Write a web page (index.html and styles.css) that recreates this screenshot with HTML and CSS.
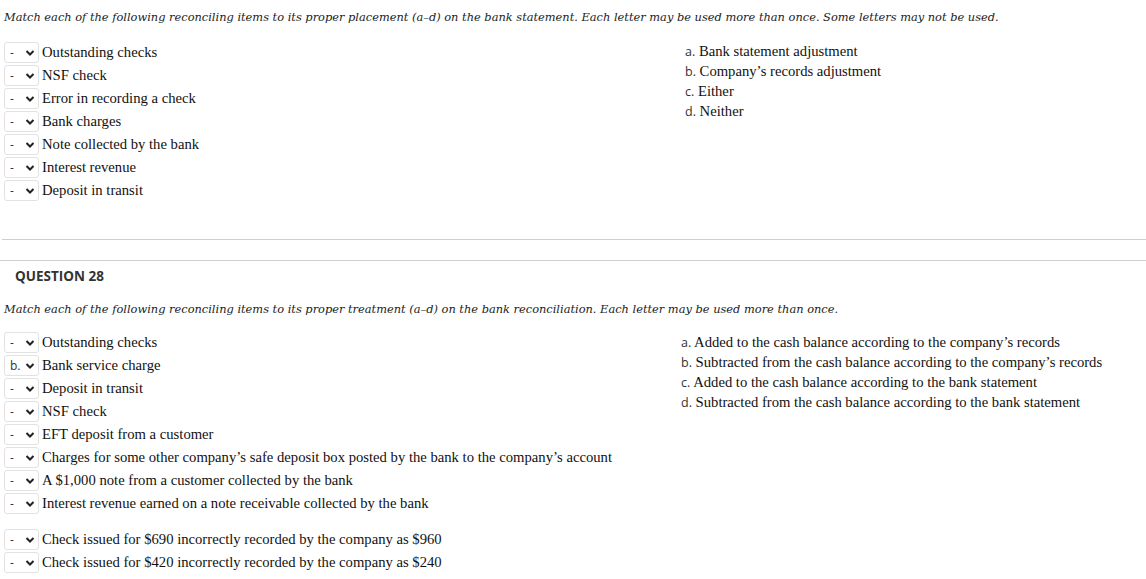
FILE: index.html
```html
<!DOCTYPE html>
<html>
<head>
<meta charset="utf-8">
<link rel="stylesheet" href="styles.css">
</head>
<body>
<div class="q q1">
  <p class="intro">Match each of the following reconciling items to its proper placement (a–d) on the bank statement. Each letter may be used more than once. Some letters may not be used.</p>
  <div class="match">
    <ul class="items">
      <li><span class="sel"><span class="val">-</span><svg class="chev" viewBox="0 0 10 8" width="10" height="8"><path d="M1.5 2 L5 5.5 L8.5 2" fill="none" stroke="#222" stroke-width="2"/></svg></span>Outstanding checks</li>
      <li><span class="sel"><span class="val">-</span><svg class="chev" viewBox="0 0 10 8" width="10" height="8"><path d="M1.5 2 L5 5.5 L8.5 2" fill="none" stroke="#222" stroke-width="2"/></svg></span>NSF check</li>
      <li><span class="sel"><span class="val">-</span><svg class="chev" viewBox="0 0 10 8" width="10" height="8"><path d="M1.5 2 L5 5.5 L8.5 2" fill="none" stroke="#222" stroke-width="2"/></svg></span>Error in recording a check</li>
      <li><span class="sel"><span class="val">-</span><svg class="chev" viewBox="0 0 10 8" width="10" height="8"><path d="M1.5 2 L5 5.5 L8.5 2" fill="none" stroke="#222" stroke-width="2"/></svg></span>Bank charges</li>
      <li><span class="sel"><span class="val">-</span><svg class="chev" viewBox="0 0 10 8" width="10" height="8"><path d="M1.5 2 L5 5.5 L8.5 2" fill="none" stroke="#222" stroke-width="2"/></svg></span>Note collected by the bank</li>
      <li><span class="sel"><span class="val">-</span><svg class="chev" viewBox="0 0 10 8" width="10" height="8"><path d="M1.5 2 L5 5.5 L8.5 2" fill="none" stroke="#222" stroke-width="2"/></svg></span>Interest revenue</li>
      <li><span class="sel"><span class="val">-</span><svg class="chev" viewBox="0 0 10 8" width="10" height="8"><path d="M1.5 2 L5 5.5 L8.5 2" fill="none" stroke="#222" stroke-width="2"/></svg></span>Deposit in transit</li>
    </ul>
    <ol class="choices">
      <li><span class="let">a.</span> Bank statement adjustment</li>
      <li><span class="let">b.</span> Company’s records adjustment</li>
      <li><span class="let">c.</span> Either</li>
      <li><span class="let">d.</span> Neither</li>
    </ol>
  </div>
</div>
<hr class="rule rule-a">
<hr class="rule rule-b">
<div class="q q2">
  <h2 class="qtitle">QUESTION 28</h2>
  <p class="intro">Match each of the following reconciling items to its proper treatment (a–d) on the bank reconciliation. Each letter may be used more than once.</p>
  <div class="match">
    <div class="items-wrap">
      <ul class="items">
        <li><span class="sel"><span class="val">-</span><svg class="chev" viewBox="0 0 10 8" width="10" height="8"><path d="M1.5 2 L5 5.5 L8.5 2" fill="none" stroke="#222" stroke-width="2"/></svg></span>Outstanding checks</li>
        <li><span class="sel"><span class="val">b.</span><svg class="chev" viewBox="0 0 10 8" width="10" height="8"><path d="M1.5 2 L5 5.5 L8.5 2" fill="none" stroke="#222" stroke-width="2"/></svg></span>Bank service charge</li>
        <li><span class="sel"><span class="val">-</span><svg class="chev" viewBox="0 0 10 8" width="10" height="8"><path d="M1.5 2 L5 5.5 L8.5 2" fill="none" stroke="#222" stroke-width="2"/></svg></span>Deposit in transit</li>
        <li><span class="sel"><span class="val">-</span><svg class="chev" viewBox="0 0 10 8" width="10" height="8"><path d="M1.5 2 L5 5.5 L8.5 2" fill="none" stroke="#222" stroke-width="2"/></svg></span>NSF check</li>
        <li><span class="sel"><span class="val">-</span><svg class="chev" viewBox="0 0 10 8" width="10" height="8"><path d="M1.5 2 L5 5.5 L8.5 2" fill="none" stroke="#222" stroke-width="2"/></svg></span>EFT deposit from a customer</li>
        <li><span class="sel"><span class="val">-</span><svg class="chev" viewBox="0 0 10 8" width="10" height="8"><path d="M1.5 2 L5 5.5 L8.5 2" fill="none" stroke="#222" stroke-width="2"/></svg></span>Charges for some other company’s safe deposit box posted by the bank to the company’s account</li>
        <li><span class="sel"><span class="val">-</span><svg class="chev" viewBox="0 0 10 8" width="10" height="8"><path d="M1.5 2 L5 5.5 L8.5 2" fill="none" stroke="#222" stroke-width="2"/></svg></span>A $1,000 note from a customer collected by the bank</li>
        <li><span class="sel"><span class="val">-</span><svg class="chev" viewBox="0 0 10 8" width="10" height="8"><path d="M1.5 2 L5 5.5 L8.5 2" fill="none" stroke="#222" stroke-width="2"/></svg></span>Interest revenue earned on a note receivable collected by the bank</li>
      </ul>
      <ul class="items items-gap">
        <li><span class="sel"><span class="val">-</span><svg class="chev" viewBox="0 0 10 8" width="10" height="8"><path d="M1.5 2 L5 5.5 L8.5 2" fill="none" stroke="#222" stroke-width="2"/></svg></span>Check issued for $690 incorrectly recorded by the company as $960</li>
        <li><span class="sel"><span class="val">-</span><svg class="chev" viewBox="0 0 10 8" width="10" height="8"><path d="M1.5 2 L5 5.5 L8.5 2" fill="none" stroke="#222" stroke-width="2"/></svg></span>Check issued for $420 incorrectly recorded by the company as $240</li>
      </ul>
    </div>
    <ol class="choices">
      <li><span class="let">a.</span> Added to the cash balance according to the company’s records</li>
      <li><span class="let">b.</span> Subtracted from the cash balance according to the company’s records</li>
      <li><span class="let">c.</span> Added to the cash balance according to the bank statement</li>
      <li><span class="let">d.</span> Subtracted from the cash balance according to the bank statement</li>
    </ol>
  </div>
</div>
</body>
</html>
```
FILE: styles.css
```css
html, body {
  margin: 0;
  padding: 0;
  background: #fff;
}
body {
  font-family: "Liberation Serif", "Times New Roman", serif;
  font-size: 14.67px;
  color: #111;
  width: 1146px;
  overflow: hidden;
}
.intro {
  margin: 0;
  padding-left: 4px;
  font-family: "DejaVu Serif", serif;
  font-style: italic;
  font-size: 11.4px;
  line-height: 20px;
  color: #222;
  white-space: nowrap;
}
.q1 {
  padding-top: 7px;
}
.q1 .match {
  margin-top: 14px;
}
.match {
  display: flex;
}
.items-wrap {
  width: 679px;
}
.q1 .items {
  width: 679px;
}
.items {
  list-style: none;
  margin: 0;
  padding: 0 0 0 4px;
}
.items li {
  display: flex;
  align-items: center;
  height: 23px;
  white-space: nowrap;
}
.items-gap {
  margin-top: 13px;
}
.sel {
  box-sizing: border-box;
  width: 35px;
  height: 21px;
  border: 1px solid #e2e2e2;
  border-radius: 3px;
  display: flex;
  align-items: center;
  padding-left: 5px;
  margin-right: 3px;
  flex: none;
  background: #fff;
}
.val {
  font-family: "Open Sans", sans-serif;
  font-size: 12px;
  color: #333;
  width: 15px;
}
.chev {
  display: block;
}
.choices {
  list-style: none;
  margin: 0;
  padding: 0 0 0 2px;
}
.q1 .choices {
  margin-top: 0;
}
.choices li {
  height: 20px;
  line-height: 20px;
  white-space: nowrap;
}
.let {
  font-family: "Open Sans", sans-serif;
  font-size: 12.5px;
  color: #333;
}
.rule {
  border: 0;
  height: 1px;
  background: #cfcfcf;
  margin: 0;
}
.rule-a {
  margin-top: 37px;
  margin-left: 2px;
}
.rule-b {
  margin-top: 20px;
}
.qtitle {
  margin: 0;
  padding: 6px 0 0 15px;
  font-family: "Open Sans", sans-serif;
  font-weight: 700;
  font-size: 13.5px;
  line-height: 18px;
  color: #333;
}
.q2 .intro {
  margin-top: 14px;
}
.q2 .match {
  margin-top: 12px;
}
.q2 .choices {
  margin-top: 1px;
}
```
